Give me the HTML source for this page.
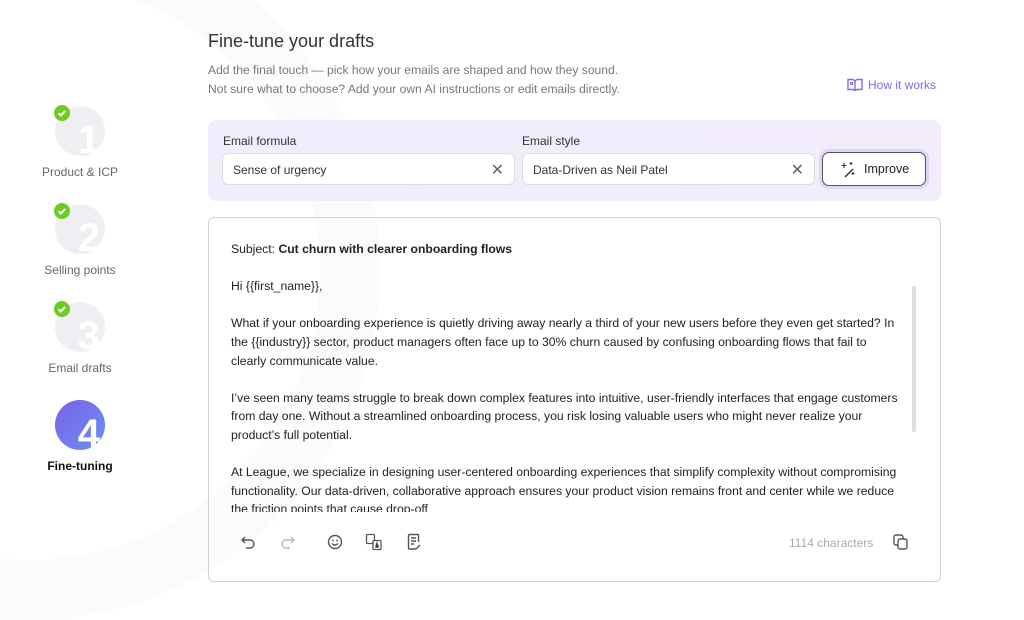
<!DOCTYPE html>
<html><head><meta charset="utf-8"><style>
*{box-sizing:border-box;margin:0;padding:0}
body{width:1024px;height:595px;overflow:hidden;background:#fff;font-family:"Liberation Sans",Arial,sans-serif;position:relative;color:#222}
.bgarc{position:absolute;border-radius:50%;border:60px solid #fbfbfd;}
.circ{position:absolute;left:55px;width:50px;height:50px;border-radius:50%;background:#efeff3;overflow:hidden}
.circ span{position:absolute;right:5px;bottom:-7px;font-size:40px;font-weight:bold;color:#fff}
.chk{position:absolute;left:54px;width:16px;height:16px;border-radius:50%;background:#6ccb1f}
.lbl{position:absolute;width:160px;text-align:center;font-size:12px;color:#666}
.h1{position:absolute;left:208px;top:31px;font-size:18px;color:#333}
.sub{position:absolute;left:208px;top:61px;font-size:12.1px;color:#777;line-height:18.5px}
.how{position:absolute;left:847px;top:78px;font-size:12px;color:#7a6cf0}
.panel{position:absolute;left:208px;top:120px;width:733px;height:81px;border-radius:8px;background:linear-gradient(90deg,#eeeefd,#f3ecfb)}
.fl{position:absolute;top:14px;font-size:12px;color:#333}
.inp{position:absolute;top:33px;height:32px;background:#fff;border:1px solid #ddd;border-radius:6px;font-size:12px;padding:9px 10px;color:#333}
.inp b{position:absolute;right:10px;top:6px;font-weight:normal;font-size:16px;color:#666}
.btn{position:absolute;left:614px;top:32px;width:104px;height:34px;border:1px solid #555;border-radius:7px;background:#fff;box-shadow:0 0 0 3px #ddd5fb;font-size:12.5px;padding:9px 0 0 41px;color:#222}
.box{position:absolute;left:208px;top:217px;width:733px;height:365px;border:1px solid #d0d0d6;border-radius:6px;overflow:hidden}
.txt{position:absolute;left:22px;top:22px;font-size:12.2px;line-height:18.6px;color:#222;white-space:nowrap}
.clip{position:absolute;left:0;top:0;width:700px;height:294px;overflow:hidden}
.scroll{position:absolute;left:703px;top:68px;width:4px;height:146px;background:#ddd;border-radius:2px}
.foot{position:absolute;left:0;top:308px;width:733px;height:36px}
.ic{position:absolute;top:7px}
</style></head><body>
<div class="bgarc" style="left:-320px;top:-80px;width:700px;height:700px"></div>

<div class="circ" style="top:106px"><span>1</span></div>
<div class="chk" style="top:105px"><svg width="16" height="16"><path d="M4.5 8.3l2.3 2.2 4.5-4.6" stroke="#fff" stroke-width="2" fill="none"/></svg></div>
<div class="lbl" style="top:165px">Product &amp; ICP</div>
<div class="circ" style="top:204px"><span>2</span></div>
<div class="chk" style="top:203px"><svg width="16" height="16"><path d="M4.5 8.3l2.3 2.2 4.5-4.6" stroke="#fff" stroke-width="2" fill="none"/></svg></div>
<div class="lbl" style="top:263px">Selling points</div>
<div class="circ" style="top:302px"><span>3</span></div>
<div class="chk" style="top:301px"><svg width="16" height="16"><path d="M4.5 8.3l2.3 2.2 4.5-4.6" stroke="#fff" stroke-width="2" fill="none"/></svg></div>
<div class="lbl" style="top:361px">Email drafts</div>
<div class="circ" style="top:400px;background:linear-gradient(135deg,#7b62e8,#6a8ef3)"><span>4</span></div>
<div class="lbl" style="top:459px;color:#111;font-weight:bold">Fine-tuning</div>

<div class="h1">Fine-tune your drafts</div>
<div class="sub">Add the final touch — pick how your emails are shaped and how they sound.<br>Not sure what to choose? Add your own AI instructions or edit emails directly.</div>
<div class="how"><svg width="16" height="13" style="vertical-align:-2px;margin-right:5px"><path d="M1 1.5h5l2 1.5 2-1.5h5v10h-5l-2 1-2-1H1z M8 3v9" stroke="#7a6cf0" stroke-width="1.4" fill="none"/><path d="M3.5 4.5h2v2h-2z" stroke="#7a6cf0" fill="none"/></svg>How it works</div>

<div class="panel">
<div class="fl" style="left:15px">Email formula</div>
<div class="inp" style="left:14px;width:293px">Sense of urgency<b>✕</b></div>
<div class="fl" style="left:314px">Email style</div>
<div class="inp" style="left:314px;width:293px">Data-Driven as Neil Patel<b>✕</b></div>
<div class="btn"><svg width="18" height="18" style="position:absolute;left:16px;top:8px"><path d="M6 16l8-8" stroke="#333" stroke-width="1.5"/><path d="M5 2v5M2.5 4.5h5M12 1v3M10.5 2.5h3M14 11v3M12.5 12.5h3" stroke="#333" stroke-width="1.1"/></svg>Improve</div>
</div>

<div class="box">
<div class="clip"><div class="txt">Subject: <b>Cut churn with clearer onboarding flows</b><br><br>Hi {{first_name}},<br><br>What if your onboarding experience is quietly driving away nearly a third of your new users before they even get started? In<br>the {{industry}} sector, product managers often face up to 30% churn caused by confusing onboarding flows that fail to<br>clearly communicate value.<br><br>I’ve seen many teams struggle to break down complex features into intuitive, user-friendly interfaces that engage customers<br>from day one. Without a streamlined onboarding process, you risk losing valuable users who might never realize your<br>product’s full potential.<br><br>At League, we specialize in designing user-centered onboarding experiences that simplify complexity without compromising<br>functionality. Our data-driven, collaborative approach ensures your product vision remains front and center while we reduce<br>the friction points that cause drop-off</div></div>
<div class="scroll"></div>
<div class="foot">
<svg class="ic" style="left:30px" width="18" height="18"><path d="M6 4L3 7l3 3M3 7h8a4 4 0 010 8H7" stroke="#555" stroke-width="1.4" fill="none"/></svg>
<svg class="ic" style="left:70px" width="18" height="18"><path d="M12 4l3 3-3 3M15 7H7a4 4 0 000 8h4" stroke="#bbb" stroke-width="1.4" fill="none"/></svg>
<svg class="ic" style="left:117px" width="18" height="18"><circle cx="9" cy="9" r="6.5" stroke="#555" stroke-width="1.4" fill="none"/><circle cx="7" cy="7.5" r=".9" fill="#555"/><circle cx="11" cy="7.5" r=".9" fill="#555"/><path d="M6 10.5q3 3 6 0" stroke="#555" stroke-width="1.3" fill="none"/></svg>
<svg class="ic" style="left:156px" width="18" height="18"><rect x="1.5" y="1.5" width="8" height="9" rx="1" stroke="#555" stroke-width="1.3" fill="none"/><rect x="8" y="7.5" width="8" height="9" rx="1" stroke="#555" stroke-width="1.3" fill="#fff"/><path d="M10.3 14.5l1.7-5 1.7 5M11 12.8h2" stroke="#555" stroke-width="1"/></svg>
<svg class="ic" style="left:196px" width="18" height="18"><path d="M11 16H4.5a1 1 0 01-1-1V2.5a1 1 0 011-1h8a1 1 0 011 1V9" stroke="#555" stroke-width="1.4" fill="none"/><path d="M6 5h5M6 8h5M6 11h3M11 16l4-4" stroke="#555" stroke-width="1.4"/></svg>
<div style="position:absolute;left:580px;top:10px;font-size:12px;color:#aaa">1114 characters</div>
<svg class="ic" style="left:683px" width="18" height="18"><rect x="2" y="2" width="9" height="10" rx="2" stroke="#555" stroke-width="1.4" fill="none"/><rect x="6" y="6" width="9" height="10" rx="2" stroke="#555" stroke-width="1.4" fill="#fff"/></svg>
</div>
</div>
</body></html>
